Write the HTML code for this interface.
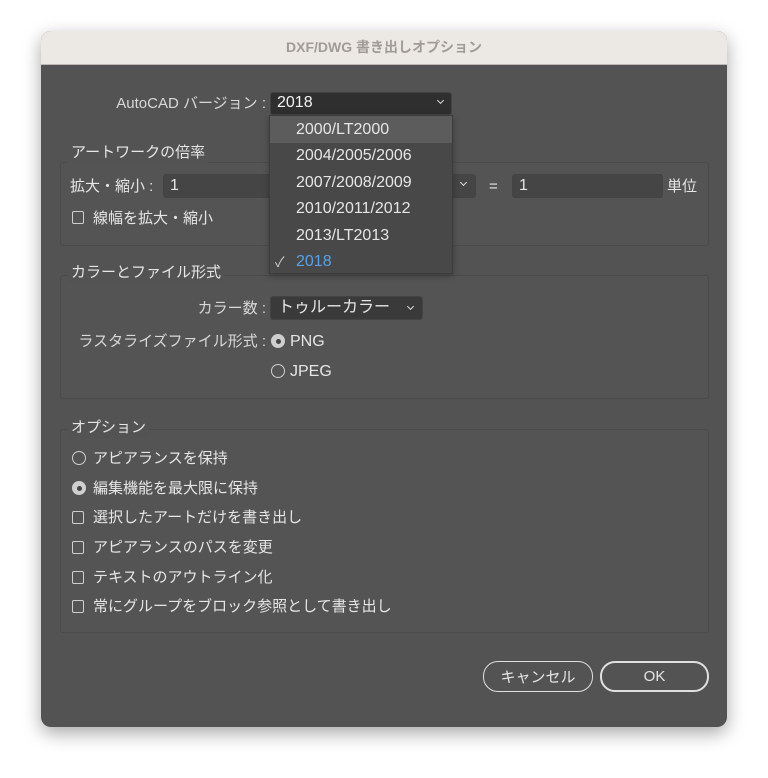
<!DOCTYPE html>
<html><head><meta charset="utf-8"><style>
*{box-sizing:border-box;margin:0;padding:0}
body{width:768px;height:778px;background:#fff;position:relative;overflow:hidden;font-family:"Liberation Sans","Noto Sans CJK JP",sans-serif;color:#e6e6e6;font-size:15px}
.dlg{position:absolute;left:41px;top:31px;width:686px;height:696px;background:#535353;border-radius:10px;overflow:hidden;box-shadow:0 6px 18px rgba(0,0,0,.35)}
.title{height:34px;background:#ece8e4;border-bottom:1px solid #bdb8b3;text-align:center;line-height:33px;font-size:14px;font-weight:bold;color:#a09b96}
.a{position:absolute;white-space:nowrap;line-height:20px}
.r{position:absolute;white-space:nowrap;line-height:20px;text-align:right}
.box{position:absolute;border:1px solid #4b4b4b;border-radius:3px;background:#545454}
.lab{position:absolute;background:#535353;padding:0 3px;line-height:20px;white-space:nowrap}
.sel{position:absolute;border-radius:3px;background:#3a3a3a;border:1px solid #444}
.chev{position:absolute;width:5px;height:5px;border-right:1.5px solid #ddd;border-bottom:1.5px solid #ddd;transform:rotate(45deg)}
.cb{position:absolute;width:12px;height:13px;border:1px solid #cfcfcf;border-radius:2px}
.rd{position:absolute;width:14px;height:14px;border:1px solid #cfcfcf;border-radius:50%}
.rdon{position:absolute;width:14px;height:14px;border-radius:50%;background:#cfcfcf}
.rdon:after{content:"";position:absolute;left:4.5px;top:4.5px;width:5px;height:5px;border-radius:50%;background:#444}
.btn{position:absolute;border:1.5px solid #e0e0e0;border-radius:15px;text-align:center;line-height:28px;font-size:15px}
</style></head><body>
<div class="dlg">
<div class="title">DXF/DWG 書き出しオプション</div>
</div>
<div style="position:absolute;left:41px;top:31px;width:686px;height:696px">
<div class="r" style="left:0;width:225px;top:63px;color:#d8d8d8">AutoCAD バージョン :</div>
<div class="sel" style="left:229px;top:61px;width:182px;height:23px;background:#2f2f2f"></div>
<div class="a" style="left:236px;top:62px;font-size:16px;color:#f2f2f2">2018</div>
<div class="chev" style="left:397px;top:67px"></div>

<div class="box" style="left:19px;top:131px;width:649px;height:84px"></div>
<div class="lab" style="left:27px;top:112px">アートワークの倍率</div>
<div class="a" style="left:29px;top:146px">拡大・縮小 :</div>
<div class="sel" style="left:122px;top:143px;width:110px;height:24px;background:#454545"></div>
<div class="a" style="left:129px;top:145px;font-size:16px">1</div>
<div class="sel" style="left:400px;top:143px;width:35px;height:24px;background:#454545"></div>
<div class="chev" style="left:420px;top:149px"></div>
<div class="a" style="left:448px;top:146px">=</div>
<div class="sel" style="left:471px;top:143px;width:151px;height:24px;background:#454545"></div>
<div class="a" style="left:478px;top:145px;font-size:16px">1</div>
<div class="a" style="left:626px;top:146px">単位</div>
<div class="cb" style="left:31px;top:180px"></div>
<div class="a" style="left:52px;top:178px">線幅を拡大・縮小</div>

<div class="box" style="left:19px;top:244px;width:649px;height:124px"></div>
<div class="lab" style="left:27px;top:232px">カラーとファイル形式</div>
<div class="r" style="left:0;width:225px;top:268px;color:#d8d8d8">カラー数 :</div>
<div class="sel" style="left:229px;top:265px;width:153px;height:24px"></div>
<div class="a" style="left:237px;top:267px;font-size:16px">トゥルーカラー</div>
<div class="chev" style="left:367px;top:273px"></div>
<div class="r" style="left:0;width:225px;top:301px;color:#d8d8d8">ラスタライズファイル形式 :</div>
<div class="rdon" style="left:230px;top:303px"></div>
<div class="a" style="left:249px;top:301px;font-size:16px">PNG</div>
<div class="rd" style="left:230px;top:333px"></div>
<div class="a" style="left:249px;top:331px;font-size:16px">JPEG</div>

<div class="box" style="left:19px;top:398px;width:649px;height:204px"></div>
<div class="lab" style="left:27px;top:387px">オプション</div>
<div class="rd" style="left:31px;top:420px"></div><div class="a" style="left:52px;top:418px">アピアランスを保持</div>
<div class="rdon" style="left:31px;top:450px"></div><div class="a" style="left:52px;top:448px">編集機能を最大限に保持</div>
<div class="cb" style="left:31px;top:480px"></div><div class="a" style="left:52px;top:477px">選択したアートだけを書き出し</div>
<div class="cb" style="left:31px;top:510px"></div><div class="a" style="left:52px;top:507px">アピアランスのパスを変更</div>
<div class="cb" style="left:31px;top:540px"></div><div class="a" style="left:52px;top:537px">テキストのアウトライン化</div>
<div class="cb" style="left:31px;top:569px"></div><div class="a" style="left:52px;top:566px">常にグループをブロック参照として書き出し</div>

<div class="btn" style="left:442px;top:630px;width:110px;height:31px;padding-top:2px">キャンセル</div>
<div class="btn" style="left:559px;top:630px;width:109px;height:31px;border-width:2px">OK</div>

<div style="position:absolute;left:228px;top:84px;width:184px;height:159px;background:#484848;border:1px solid #3c3c3c;box-shadow:0 2px 6px rgba(0,0,0,.3)"></div>
<div style="position:absolute;left:229px;top:85px;width:182px;height:27px;background:#5c5c5c"></div>
<div class="a" style="left:255px;top:89px;font-size:16px">2000/LT2000</div>
<div class="a" style="left:255px;top:115px;font-size:16px">2004/2005/2006</div>
<div class="a" style="left:255px;top:142px;font-size:16px">2007/2008/2009</div>
<div class="a" style="left:255px;top:168px;font-size:16px">2010/2011/2012</div>
<div class="a" style="left:255px;top:195px;font-size:16px">2013/LT2013</div>
<div class="a" style="left:234px;top:221px;font-size:14px;color:#ccc">✓</div>
<div class="a" style="left:255px;top:221px;font-size:16px;color:#5aa0e8">2018</div>
</div>
</body></html>
